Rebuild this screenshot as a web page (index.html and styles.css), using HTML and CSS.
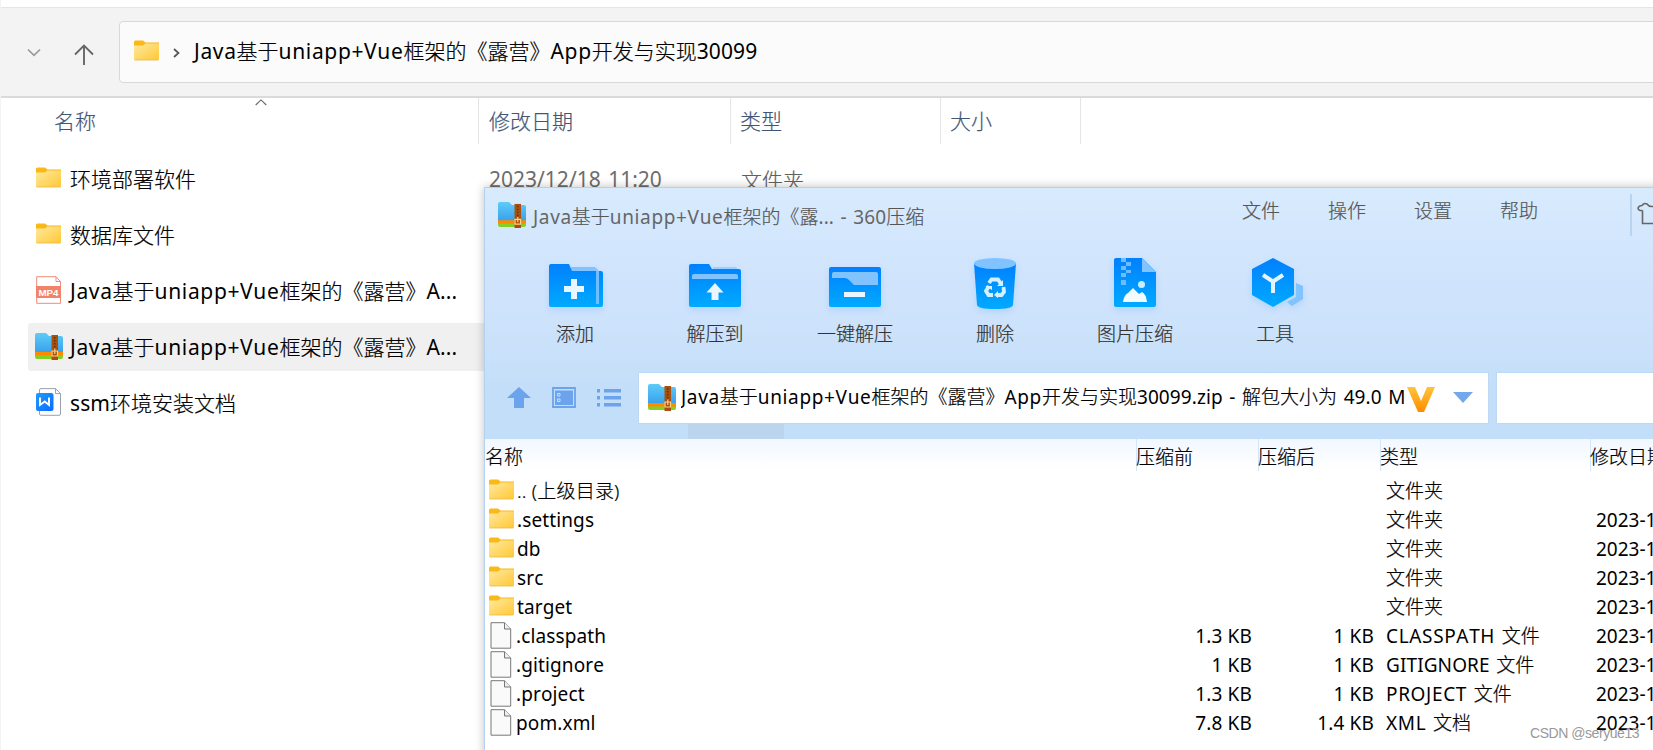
FILE: index.html
```html
<!DOCTYPE html>
<html lang="zh-CN">
<head>
<meta charset="utf-8">
<title>文件资源管理器</title>
<link rel="stylesheet" href="styles.css">
</head>
<body>
<svg class="defs" width="0" height="0" aria-hidden="true">
  <defs>
    <linearGradient id="gFolder" x1="0" y1="0" x2="1" y2="1"><stop offset="0" stop-color="#ffe8a0"/><stop offset="1" stop-color="#ffc935"/></linearGradient>
    <linearGradient id="gBlue" x1="0" y1="0" x2="0" y2="1"><stop offset="0" stop-color="#0080ff"/><stop offset="1" stop-color="#00aaff"/></linearGradient>
    <linearGradient id="gSky" x1="0" y1="0" x2="0" y2="1"><stop offset="0" stop-color="#5fcbf8"/><stop offset="1" stop-color="#3aa2ec"/></linearGradient>
    <linearGradient id="gWord" x1="0" y1="0" x2="1" y2="1"><stop offset="0" stop-color="#1f9bff"/><stop offset="1" stop-color="#0a6cff"/></linearGradient>
    <linearGradient id="gGold" x1="0" y1="0" x2="0" y2="1"><stop offset="0" stop-color="#ffc53a"/><stop offset="1" stop-color="#ff8c00"/></linearGradient>
  </defs>
  <symbol id="folder" viewBox="0 0 26 21">
    <path d="M0 2Q0 .5 1.500 .5H9L11.500 2.500H25V8H0Z" fill="#fab917"/>
    <path d="M0 5.500H9L11.500 3.500H25V19Q25 20 24 20H1Q0 20 0 19Z" fill="url(#gFolder)"/>
    <path d="M.5 20H24.500" stroke="#e8b84c" stroke-width=".8"/>
  </symbol>
  <symbol id="zip" viewBox="0 0 28 28">
    <path d="M0 17H28V24Q28 26 26 26H2Q0 26 0 24Z" fill="#86cf27"/>
    <path d="M0 17H28V22.500H0Z" fill="#ff8a00"/>
    <path d="M0 2Q0 0 2 0H11L14 3H26Q28 3 28 5V19H0Z" fill="url(#gSky)"/>
    <path d="M16.500 2H23V27H16.500Z" fill="#a9500f"/>
    <path d="M19.700 4V17" stroke="#6b2d04" stroke-width="1.500" stroke-dasharray="1.500 1.500"/>
    <path d="M17 18H22.500V23H17ZM19.800 15.500V21" fill="none" stroke="#ffd489" stroke-width="1.200"/>
  </symbol>
  <symbol id="doc" viewBox="0 0 22 27">
    <path d="M1 .7H14.500L20.700 7V26.200H1Z" fill="#fafafa" stroke="#777" stroke-width="1"/>
    <path d="M14.500 .7V7H20.700" fill="#eee" stroke="#777" stroke-width="1"/>
  </symbol>
</svg>

<div class="screen">
  <div class="navbar">
    <svg class="nav-down" width="14" height="9" viewBox="0 0 14 9"><path d="M1 1.500L7 7.300L13 1.500" fill="none" stroke="#999" stroke-width="1.700"/></svg>
    <svg class="nav-up" width="20" height="21" viewBox="0 0 20 21"><path d="M10 21V1.500M1 10.500L10 1.500L19 10.500" fill="none" stroke="#666" stroke-width="1.900"/></svg>
    <div class="address">
      <svg class="ico-folder" width="26" height="21"><use href="#folder"/></svg>
      <svg class="crumb" width="7" height="10" viewBox="0 0 7 10"><path d="M1 1L5.500 5L1 9" fill="none" stroke="#555" stroke-width="1.700"/></svg>
      <span class="address-text"><span class="en">Java</span>基于<span class="en">uniapp+Vue</span>框架的《露营》<span class="en">App</span>开发与实现<span class="en num">30099</span></span>
    </div>
  </div>

  <div class="columns">
    <div class="col col-name">名称
      <svg class="sort" width="12" height="7" viewBox="0 0 12 7"><path d="M.7 6L6 .9L11.300 6" fill="none" stroke="#666" stroke-width="1.100"/></svg>
    </div>
    <div class="col col-date">修改日期</div>
    <div class="col col-type">类型</div>
    <div class="col col-size">大小</div>
  </div>

  <div class="files">
    <div class="file"><div class="name"><svg class="ico-folder" width="26" height="21"><use href="#folder"/></svg><span class="label">环境部署软件</span></div><div class="date">2023/12/18 11:20</div><div class="type">文件夹</div></div>
    <div class="file"><div class="name"><svg class="ico-folder" width="26" height="21"><use href="#folder"/></svg><span class="label">数据库文件</span></div></div>
    <div class="file"><div class="name">
      <svg class="ico-mp4" width="26" height="28" viewBox="0 0 26 28"><path d="M.7 .7H20L24.500 5.500V27.300H.7Z" fill="#fff" stroke="#f08c78"/><path d="M20 .7V5.500H24.500" fill="none" stroke="#f08c78"/><path d="M0 10H25V22H0Z" fill="#f2836b"/><text x="12.500" y="19.700" class="mp4-text" textLength="20" lengthAdjust="spacingAndGlyphs">MP4</text></svg>
      <span class="label"><span class="en">Java</span>基于<span class="en">uniapp+Vue</span>框架的《露营》<span class="en num">A...</span></span></div></div>
    <div class="file selected"><div class="name"><svg class="ico-zip" width="28" height="28"><use href="#zip"/></svg><span class="label"><span class="en">Java</span>基于<span class="en">uniapp+Vue</span>框架的《露营》<span class="en num">A...</span></span></div></div>
    <div class="file"><div class="name">
      <svg class="ico-word" width="26" height="28" viewBox="0 0 26 28"><path d="M3.500 2Q3.500 .6 5 .6H19.500L24.500 5.600V26Q24.500 27.300 23 27.300H5Q3.500 27.300 3.500 26Z" fill="#fff" stroke="#9aa1b0"/><path d="M19.500 .6V5.600H24.500" fill="none" stroke="#9aa1b0"/><rect y="5" width="17.500" height="18" rx="2" fill="url(#gWord)"/><path d="M4 9.500V17L8.800 13.500L13 17V9.500" fill="none" stroke="#fff" stroke-width="1.900"/></svg>
      <span class="label"><span class="en num">ssm</span>环境安装文档</span></div></div>
  </div>

  <div class="window">
    <div class="chrome">
      <div class="titlebar">
        <svg class="title-zip" width="28" height="26" viewBox="0 0 28 27" preserveAspectRatio="none"><use href="#zip" width="28" height="28"/></svg>
        <span class="title-text"><span class="en">Java</span>基于<span class="en">uniapp+Vue</span>框架的《露<span class="en num">... - 360</span>压缩</span>
        <div class="menu"><span>文件</span><span>操作</span><span>设置</span><span>帮助</span></div>
        <div class="skin"><svg width="26" height="24" viewBox="0 0 26 24"><path d="M5.500 9.500H3Q1 9 1 7Q2 4.500 5 4.500Q7 1.500 10 3Q12 6 16 5.500H26M5.500 9.500V22.500H26" fill="none" stroke="#666" stroke-width="1.600"/></svg></div>
      </div>
      <div class="toolbar">
        <div class="tool"><svg width="60" height="60" viewBox="0 0 60 60"><path d="M26 13H50L54 17V22H26Z" fill="#80c3ff"/><path d="M4 12Q4 10 6 10H24L27 17H56Q58 17 58 19V51Q58 53 56 53H6Q4 53 4 51Z" fill="url(#gBlue)"/><path d="M51 17H54V50H51Z" fill="#70bdff"/><path d="M19 35H39M29 25V45" stroke="#e9f6ff" stroke-width="6"/></svg><span>添加</span></div>
        <div class="tool"><svg width="60" height="60" viewBox="0 0 60 60"><path d="M28 13H51L54 17H28Z" fill="#9bd0ff"/><path d="M4 12Q4 10 6 10H24L27 15H54Q56 15 56 17V51Q56 53 54 53H6Q4 53 4 51Z" fill="url(#gBlue)"/><path d="M7 25V22Q7 20 9 20H51Q53 20 53 22V25Z" fill="#80c3ff"/><path d="M30 29L38.500 38.500H33.500V46H26.500V38.500H21.500Z" fill="#e9f6ff"/></svg><span>解压到</span></div>
        <div class="tool"><svg width="60" height="60" viewBox="0 0 60 60"><rect x="4" y="13" width="52" height="40" rx="2" fill="url(#gBlue)"/><path d="M7 24V20Q7 18 9 18H51Q53 18 53 20V31H29L24 26Q22 24 20 24Z" fill="#80c3ff"/><path d="M19 40.500H40" stroke="#e9f6ff" stroke-width="5"/></svg><span>一键解压</span></div>
        <div class="tool"><svg width="60" height="60" viewBox="0 0 60 60"><path d="M9 9L12 51Q13 55 30 55T48 51L51 9Z" fill="url(#gBlue)"/><ellipse cx="30" cy="9.500" rx="21" ry="5.500" fill="#80c3ff"/><g fill="none" stroke="#d5f0ff" stroke-width="3.800"><path d="M24 29L26.500 25.500H33L36 30"/><path d="M38.500 33L39 38L36.500 41H31"/><path d="M28 41H23.500L21 37L24 32"/></g><path d="M38 26V32H32ZM33 37V44L29 41ZM20 32H27V36Z" fill="#d5f0ff"/></svg><span>删除</span></div>
        <div class="tool"><svg width="60" height="60" viewBox="0 0 60 60"><path d="M9 6Q9 4 11 4H37L51 18V51Q51 53 49 53H11Q9 53 9 51Z" fill="url(#gBlue)"/><path d="M37 4L51 18H37Z" fill="#80c3ff"/><path d="M16 4H21V8H16ZM21 8H26V12H21ZM16 12H21V16H16ZM21 16H26V19H21ZM16 19H21V23H16ZM16 26H21V31H16Z" fill="#6dbcff"/><circle cx="36.500" cy="30.500" r="3.500" fill="#c6ecff"/><path d="M18 48Q19 41 23 39L28 34L34 40L37 38Q41 40 42 48Z" fill="#f4fbff"/></svg><span>图片压缩</span></div>
        <div class="tool"><svg width="60" height="60" viewBox="0 0 60 60"><path d="M51 29L58 32V45L47 52L42 48L51 43Z" fill="#80c3ff"/><path d="M28 4L49 15V41L28 53L7 41V15Z" fill="url(#gBlue)"/><path d="M18 21L28 27.500L38 21M28 27V39" fill="none" stroke="#e4f4ff" stroke-width="4"/></svg><span>工具</span></div>
      </div>
      <div class="pathbar">
        <div class="views">
          <svg width="24" height="22" viewBox="0 0 24 22"><path d="M12 0L24 11H17V21H7V11H0Z" fill="#6ba3ec"/></svg>
          <svg width="24" height="22" viewBox="0 0 24 22"><path d="M1 1H23V20H1Z" fill="none" stroke="#6ba3ec" stroke-width="1.800"/><path d="M3 3.500H21V18H3Z" fill="#6ba3ec"/><path d="M5.500 6.500H8V9H5.500ZM5.500 12H8V14.500H5.500Z" fill="#6ba3ec" stroke="#c9e0fa"/></svg>
          <svg width="24" height="22" viewBox="0 0 24 22"><path d="M0 2H3V5.500H0ZM7 2H24V5.500H7ZM0 9H3V12.500H0ZM7 9H24V12.500H7ZM0 16H3V19.500H0ZM7 16H24V19.500H7Z" fill="#6ba3ec"/></svg>
        </div>
        <div class="path">
          <svg width="28" height="28"><use href="#zip"/></svg>
          <span class="path-text"><span class="en">Java</span>基于<span class="en">uniapp+Vue</span>框架的《露营》<span class="en">App</span>开发与实现<span class="en num">30099.zip - </span>解包大小为<span class="en num"> 49.0 M</span></span>
          <svg class="vip" width="28" height="26" viewBox="0 0 28 26"><path d="M0 0H8L14 14L20 0H28L17 25H11Z" fill="url(#gGold)"/></svg>
          <svg class="drop" width="20" height="11" viewBox="0 0 20 11"><path d="M0 0H20L10 11Z" fill="#74a7ec"/></svg>
        </div>
        <div class="search"></div>
      </div>
      <div class="strip"><i></i></div>
    </div>

    <div class="grid head"><span>名称</span><span>压缩前</span><span>压缩后</span><span>类型</span><span>修改日期</span></div>
    <div class="rows">
      <div class="grid row"><span class="n up"><svg width="26" height="21"><use href="#folder"/></svg>.. (上级目录)</span><span></span><span></span><span class="t">文件夹</span><span></span></div>
      <div class="grid row"><span class="n"><svg width="26" height="21"><use href="#folder"/></svg>.settings</span><span></span><span></span><span class="t">文件夹</span><span class="d">2023-1</span></div>
      <div class="grid row"><span class="n"><svg width="26" height="21"><use href="#folder"/></svg>db</span><span></span><span></span><span class="t">文件夹</span><span class="d">2023-1</span></div>
      <div class="grid row"><span class="n"><svg width="26" height="21"><use href="#folder"/></svg>src</span><span></span><span></span><span class="t">文件夹</span><span class="d">2023-1</span></div>
      <div class="grid row"><span class="n"><svg width="26" height="21"><use href="#folder"/></svg>target</span><span></span><span></span><span class="t">文件夹</span><span class="d">2023-1</span></div>
      <div class="grid row"><span class="n"><svg class="doc" width="22" height="27"><use href="#doc"/></svg>.classpath</span><span class="s">1.3 KB</span><span class="s">1 KB</span><span class="t"><span class="en">CLASSPATH </span>文件</span><span class="d">2023-1</span></div>
      <div class="grid row"><span class="n"><svg class="doc" width="22" height="27"><use href="#doc"/></svg>.gitignore</span><span class="s">1 KB</span><span class="s">1 KB</span><span class="t"><span class="en num">GITIGNORE </span>文件</span><span class="d">2023-1</span></div>
      <div class="grid row"><span class="n"><svg class="doc" width="22" height="27"><use href="#doc"/></svg>.project</span><span class="s">1.3 KB</span><span class="s">1 KB</span><span class="t"><span class="en">PROJECT </span>文件</span><span class="d">2023-1</span></div>
      <div class="grid row"><span class="n"><svg class="doc" width="22" height="27"><use href="#doc"/></svg>pom.xml</span><span class="s">7.8 KB</span><span class="s">1.4 KB</span><span class="t"><span class="en">XML </span>文档</span><span class="d">2023-1</span></div>
    </div>
  </div>
  <div class="watermark">CSDN @seryue13</div>
</div>
</body>
</html>
```
FILE: styles.css
```css
* { box-sizing: border-box; }
body { margin: 0; background: #fff; font-family: "Noto Sans", "Noto Sans CJK SC", sans-serif; font-kerning: none; color: #000; }
svg { display: block; flex: none; }
.defs { position: absolute; }
.screen { position: relative; width: 1653px; height: 750px; overflow: hidden; border-left: 1px solid #f3f3f3; white-space: nowrap; font-size: 21px; font-weight: 300; -webkit-text-stroke: .2px currentColor; }
.en { font-weight: 400; white-space: pre; letter-spacing: .65px; word-spacing: 1px; -webkit-text-stroke: 0; }
.num { letter-spacing: .1px; word-spacing: 1.5px; }

.navbar { display: flex; align-items: center; margin: 7px 0 0 -1px; height: 91px; padding-top: 14px; padding-bottom: 15px; border-top: 1px solid #e6e6e6; border-bottom: 2px solid #dadada; background: #f3f3f3; }
.nav-down { margin: 2px 0 0 27px; }
.nav-up { margin: 5px 0 0 33px; }
.address { display: flex; align-items: center; width: 1560px; height: 62px; margin-left: 25px; margin-right: -30px; padding-left: 14px; border: 1px solid #d8d8d8; border-radius: 4px; background: #fbfbfb; flex: none; }
.address .ico-folder { margin-top: -3px; }
.crumb { margin: 3px 14px 0 13px; }
.address-text { margin-top: -3px; }

.columns { display: flex; height: 46px; line-height: 46px; color: #3f5675; }
.col { border-right: 1px solid #e5e5e5; }
.col-name { position: relative; width: 478px; padding-left: 53px; }
.sort { position: absolute; left: 254px; top: 1px; }
.col-date { width: 252px; padding-left: 10px; }
.col-type { width: 210px; padding-left: 9px; }
.col-size { width: 140px; padding-left: 9px; }

.files { display: flex; flex-direction: column; gap: 8px; margin-top: 11px; padding-left: 27px; }
.file { display: flex; align-items: center; height: 48px; border-radius: 3px; }
.file.selected { background: #f0f0f0; }
.name { display: flex; align-items: center; width: 461px; padding-left: 8px; }
.label { margin-left: 8px; margin-top: -2px; }
.file .ico-folder { margin-top: -4px; }
.ico-mp4, .ico-word { margin-top: -2px; }
.ico-zip { margin-left: -1px; }
.ico-zip + .label { margin-left: 7px; }
.date { width: 252px; color: #6d6d6d; font-weight: 400; -webkit-text-stroke: 0; word-spacing: 2px; }
.type { color: #606060; }
.mp4-text { font: 700 9px "Liberation Sans", sans-serif; fill: #fff; text-anchor: middle; -webkit-text-stroke: 0; }

.window { position: absolute; left: 483px; top: 187px; width: 1180px; height: 580px; border: 1px solid #b3d2ef; background: #fff; box-shadow: 0 0 9px rgba(0, 0, 0, .25); font-size: 19px; }
.chrome { height: 251px; background: linear-gradient(#d8ebfd, #d1e5fd 28%, #cde2fb 55%, #c3def9 82%, #c3def9); }
.titlebar { display: flex; align-items: center; height: 58px; color: #555; }
.title-zip { margin-left: 13px; margin-top: -5px; }
.title-text { width: 710px; margin-left: 7px; margin-top: -2px; }
.title-text .en { color: #666; }
.menu { display: flex; gap: 48px; margin-top: -15px; }
.skin { height: 42px; margin-top: -4px; margin-left: 92px; padding: 7px 0 0 5px; border-left: 2px solid #b9d4f0; }
.toolbar { display: flex; height: 125px; padding: 8px 0 0 20px; color: #333; }
.tool { display: flex; flex-direction: column; align-items: center; width: 140px; line-height: 28px; }
.tool svg { margin-bottom: 6px; filter: drop-shadow(0 3px 3px rgba(80, 160, 255, .22)); }
.pathbar { display: flex; height: 52px; margin-top: 1px; }
.views { display: flex; gap: 21px; flex: none; width: 153px; padding: 15px 0 0 22px; }
.path { display: flex; align-items: center; flex: none; width: 851px; margin-right: 7px; padding-left: 9px; border: 1px solid #bdd8f3; background: #fff; }
.path-text { width: 725px; margin-left: 5px; margin-top: -4px; overflow: hidden; }
.vip { margin-left: 1px; margin-top: 4px; }
.drop { margin-left: 18px; margin-top: -2px; }
.search { flex: none; width: 200px; border: 1px solid #bdd8f3; background: #fff; }
.strip { height: 15px; }
.strip i { display: block; width: 96px; height: 15px; margin-left: 203px; background: #bbd5ef; }

.grid { display: grid; grid-template-columns: 651px 122px 122px 210px 200px; align-items: center; }
.head { height: 32px; background: linear-gradient(#f2f8ff, #fff); }
.head span { height: 32px; line-height: 36px; border-left: 1px solid #d3e7fb; text-indent: -1px; }
.head span:first-child { border: 0; text-indent: 0; }
.rows { padding-top: 6px; }
.row { height: 29px; line-height: 29px; }
.n { display: flex; align-items: center; padding-left: 4px; gap: 3px; font-weight: 400; letter-spacing: .12px; -webkit-text-stroke: 0; }
.up { font-weight: 300; letter-spacing: .2px; -webkit-text-stroke: .2px currentColor; }
.n svg { margin-top: -4px; margin-right: -1px; }
.n .doc { margin: -3px 1px 0 1px; }
.s { text-align: right; padding-right: 6px; font-weight: 400; letter-spacing: .15px; -webkit-text-stroke: 0; }
.t { padding-left: 6px; }
.d { padding-left: 6px; font-weight: 400; -webkit-text-stroke: 0; }
.watermark { position: absolute; left: 1529px; top: 724px; font: 14px/18px "Liberation Sans", sans-serif; letter-spacing: -.45px; color: #999; -webkit-text-stroke: 0; }
```
